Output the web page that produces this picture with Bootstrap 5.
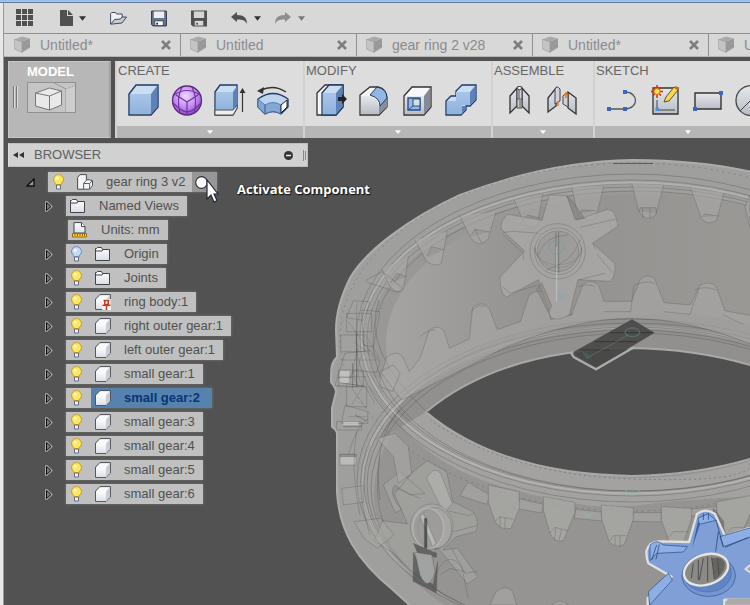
<!DOCTYPE html>
<html lang="en">
<head>
<meta charset="utf-8">
<meta name="viewport" content="width=device-width, initial-scale=1">
<title>gear ring 3 v2</title>
<link rel="stylesheet" href="https://cdn.jsdelivr.net/npm/bootstrap@5.3.0/dist/css/bootstrap.min.css">
<style>
body{font-family:"Liberation Sans",Arial,sans-serif;font-size:13px;line-height:20px;background:#525252;color:#505050}
button{border:0;padding:0;background:none;color:inherit;display:block}
svg{display:block}
.desk-edge{height:3px;background:linear-gradient(#9dbde8 0 1px,#a9c6ec 1px 2px,#5e7896 2px)}
.app-frame{border-left:3px solid #e8e8ea;box-shadow:inset 1px 0 #999;padding-left:1px;min-width:0}
.quick-bar{height:31px;background:#d8d8d8;border-bottom:1px solid #8f8f8f;padding-left:12px;gap:24px}
.split-btn{gap:6px}
.history{gap:14px}
.doc-tabs{height:23px;background:#d8d8d8;border-bottom:1px solid #b4b7b4;font-size:14px;color:#8b8b8b;padding-left:1px}
.doc-tab{width:176px;border-right:1px solid #8f8f8f;padding:0 9px;height:22px}
.doc-tab a{color:#8b8b8b;gap:10px;line-height:22px}
.doc-tab a svg{margin-top:2px}
.ribbon{padding:4px 0 0 4px;height:81px;gap:4px}
.workspace{width:103px;background:#b7b7b7;border:1px solid #c6c6c6;border-right:2px solid #a2a2a2;color:#fff;padding-left:4px;gap:9px}
.ribbon-groups{background:#ddd}
.tool-group{border-left:2px solid #d2d2d2;background:#ddd}
.g-wide{width:188px}.g-small{width:102px}
.tool-title{height:20px;padding-left:1px;color:#666}
.tool-row{height:45px;padding:3px 0 0 11px;gap:11px}
.tool-row svg{width:32px;height:34px}
.more{height:12px;background:#b6b6b6}
.viewport{background:#525252}
.scene{inset:0;z-index:0}
.browser{z-index:1;padding:5px 0 0 4px}
.browser-head{width:300px;max-width:100%;height:24px;background:#d1d1d1;border:1px solid #bdbdbd;border-left-color:#ddd;color:#606060;padding:0 1px 0 4px;gap:10px}
.tree{padding-top:5px}
.tree li{height:24px;padding-left:34px}
.tree li.root{padding-left:18px}
.twisty{width:24px;height:20px;padding-left:3px}
.root .twisty{width:22px;padding-left:0}
.leaf .twisty-gap{width:26px}
.chip{background:#c0c0c0;height:20px;box-shadow:0 0 3px #777}
.eye{width:25px;height:20px;padding-left:4px}
.node{height:20px;padding:0 8px 0 4px;gap:13px}
.root .node{padding-right:6px}
.picked{background:#5583ad;color:#0a3478;font-weight:bold;padding-right:12px}
.activate{width:25px;height:20px;background:#979797;padding-left:3px}
.tip{left:233px;top:41px;z-index:2;font:bold 13px/20px "Open Sans","Noto Sans",sans-serif;color:#fff;text-shadow:1px 1px 1px #111,0 0 2px #222}
.pointer{left:198px;top:39px;z-index:3}
</style>
<script src="https://cdn.jsdelivr.net/npm/bootstrap@5.3.0/dist/js/bootstrap.bundle.min.js"></script>
</head>
<body>
<svg width="0" height="0" class="position-absolute" aria-hidden="true">
<defs>
<linearGradient id="blueFace" x2="0" y2="1"><stop stop-color="#a9c5e6"/><stop offset="1" stop-color="#8fb2dc"/></linearGradient>
<linearGradient id="greyFace" x2="0" y2="1"><stop stop-color="#e6e8ec"/><stop offset="1" stop-color="#b9bdc6"/></linearGradient>
<linearGradient id="whiteFace" x2="0" y2="1"><stop stop-color="#fff"/><stop offset="1" stop-color="#dcdfe6"/></linearGradient>
<radialGradient id="ball" cx=".45" cy=".35" r=".7"><stop stop-color="#eed8ff"/><stop offset=".6" stop-color="#bf84ee"/><stop offset="1" stop-color="#7f3cb4"/></radialGradient>
<symbol id="tabCube" viewBox="0 0 16 16"><path d="M0 3 8 0l8 2-8 3z" fill="#aaa"/><path d="M0 3l8 2v11L0 12z" fill="#c3c5c3" stroke="#9a9a9a" stroke-width=".7"/><path d="M8 5l8-3v9l-8 5z" fill="#999"/></symbol>
<symbol id="cross" viewBox="0 0 10 10"><path d="M1 1l8 8M9 1L1 9" stroke="#7f7f7f" stroke-width="2.6"/></symbol>
<symbol id="caret" viewBox="0 0 8 5"><path d="M0 0h8L4 5z"/></symbol>
<symbol id="bulb" viewBox="0 0 12 16"><path d="M6 .6a5 5 0 0 1 5 5c0 2.300-2.200 3-2.400 5.200H3.400C3.200 8.600 1 7.900 1 5.600A5 5 0 0 1 6 .6z" fill="#fbe85c" stroke="#c99a25"/><circle cx="4.800" cy="4.200" r="1.600" fill="#fffbd0"/><path d="M4 11h4v4H4z" fill="#eef" stroke="#5b6470" stroke-width=".9"/></symbol>
<symbol id="bulbOff" viewBox="0 0 12 16"><path d="M6 .6a5 5 0 0 1 5 5c0 2.300-2.200 3-2.400 5.200H3.400C3.200 8.600 1 7.900 1 5.600A5 5 0 0 1 6 .6z" fill="#c3d9f8" stroke="#6c86b4"/><circle cx="4.800" cy="4.200" r="1.600" fill="#f2f8ff"/><path d="M4 11h4v4H4z" fill="#eef" stroke="#5b6470" stroke-width=".9"/></symbol>
<symbol id="folder" viewBox="0 0 16 16"><path d="M.5 14.500v-12h1l1-1h4l1 2h7v11z" fill="url(#whiteFace)" stroke="#3f4550"/><path d="M1 5h6l1-1.500" fill="none" stroke="#3f4550"/></symbol>
<symbol id="part" viewBox="0 0 16 16"><path d="M.6 5 5 .6h10.400V11L11 15.400H.6z" fill="#fafafa" stroke="#484b52"/><path d="M1.200 5.200H11V15H1.200z" fill="url(#whiteFace)"/><path d="M11 5.200l4-4V11l-4 4z" fill="#c9ccd2"/></symbol>
<symbol id="pinned" viewBox="0 0 16 16"><use href="#part"/><path d="M7 5h9v11H7z" fill="#fff" fill-opacity=".8"/><path d="M8.500 6.500h6M9.800 7v3.500h3.400V7M7.500 11.200h8M11.500 11v5" fill="none" stroke="#c43a1c" stroke-width="1.500"/></symbol>
<symbol id="assembly" viewBox="0 0 16 16"><path d="M.6 15.200V3.500L3 .6h6.400v5.200h3.200l2.900.9v5L12.600 15.200z" fill="#f4f5f8" stroke="#484b52"/><path d="M6.600 15V9.500L9.600 6M6.600 9.500h6l2.700-3M12.600 9.500V15" fill="none" stroke="#5d616a"/></symbol>
<symbol id="units" viewBox="0 0 16 16"><path d="M2 11V.6h7.500l3.500 4V11z" fill="url(#whiteFace)" stroke="#3f4550"/><path d="M9.500.6v4H13" fill="#fff" stroke="#3f4550"/><path d="M.5 11.500h14v3.500H.5z" fill="#ffcf2e" stroke="#9b6a0c"/><path d="M3 12v2M5.500 12v2M8 12v2M10.500 12v2M12.500 12v2" stroke="#9b6a0c"/></symbol>
<symbol id="closed" viewBox="0 0 8 11"><path d="M1.500 1.500v8L6 5.500z" fill="#555" stroke="#aaa" stroke-width="3" stroke-linejoin="round"/><path d="M1.500 1.500v8L6 5.500z" fill="#777" stroke="#111" stroke-linejoin="round"/></symbol>
<symbol id="disk" viewBox="0 0 17 17"><path d="M.6.6h15.800v15.800H2L.6 15z" fill="#68758a" stroke="#273142"/><path d="M3 1h11v7H3z" fill="#eceef2"/><path d="M4 11h9v5H4z" fill="#fff" stroke="#273142" stroke-width=".8"/><path d="M5.500 13h2v2h-2z" fill="#273142"/></symbol>
</defs>
</svg>
<div class="d-flex flex-column min-vh-100">
<div class="desk-edge"></div>
<div class="app-frame flex-grow-1 d-flex flex-column overflow-hidden">

<header class="quick-bar d-flex align-items-center">
 <button type="button" aria-label="Data panel"><svg width="20" height="18" viewBox="0 0 20 18"><path d="M0 0h5v5H0zM6 0h5v5H6zM12 0h5v5h-5zM0 6h5v5H0zM6 6h5v5H6zM12 6h5v5h-5zM0 12h5v5H0zM6 12h5v5H6zM12 12h5v5h-5z" fill="#505050"/></svg></button>
 <button type="button" aria-label="New file" class="split-btn d-flex align-items-center"><svg width="13" height="16" viewBox="0 0 13 16" fill="#505050"><path d="M0 0h7v6h6v10H0z"/><path d="M8 0l5 5H8z"/></svg><svg width="7" height="5" fill="#333"><use href="#caret"/></svg></button>
 <button type="button" aria-label="Open"><svg width="17" height="13" viewBox="0 0 17 13"><path d="M.6 12V1.500l1-1h4l1 1.500h5.600V5" fill="#eef0f5" stroke="#404a5a"/><path d="M.8 12.200 4.500 7.500l6-.5 1.500-2h4.500L12 11z" fill="#c5ccda" stroke="#404a5a"/></svg></button>
 <button type="button" aria-label="Save"><svg width="16" height="17"><use href="#disk"/></svg></button>
 <button type="button" aria-label="Save as"><svg width="16" height="17" viewBox="0 0 17 17"><path d="M0 0h17v17H2l-2-2z" fill="#505050"/><path d="M3 1h11v7H3z" fill="#d5d5d5"/><path d="M4 11h9v5H4z" fill="#d8d8d8"/><path d="M5.500 13h2v2h-2z" fill="#505050"/></svg></button>
 <div class="history d-flex align-items-center">
  <button type="button" aria-label="Undo" class="split-btn d-flex align-items-center"><svg width="17" height="12" viewBox="0 0 17 12"><path d="M0 5l6-5v3c7 0 10 3 10 9-1.500-3.500-4-4.600-10-4.600V10z" fill="#505050"/></svg><svg width="7" height="5" fill="#333"><use href="#caret"/></svg></button>
  <button type="button" aria-label="Redo" class="split-btn d-flex align-items-center"><svg width="17" height="12" viewBox="0 0 17 12"><path d="M16 5l-6-5v3C3 3 0 6 0 12c1.500-3.500 4-4.600 10-4.600V10z" fill="#8e8e8e"/></svg><svg width="7" height="5" fill="#777"><use href="#caret"/></svg></button>
 </div>
</header>

<nav class="doc-tabs d-flex overflow-hidden" aria-label="Documents">
 <div class="doc-tab d-flex align-items-center justify-content-between flex-shrink-0"><a href="#" class="d-flex text-decoration-none"><svg width="16" height="17"><use href="#tabCube"/></svg>Untitled*</a><button type="button" aria-label="Close"><svg width="10" height="10"><use href="#cross"/></svg></button></div>
 <div class="doc-tab d-flex align-items-center justify-content-between flex-shrink-0"><a href="#" class="d-flex text-decoration-none"><svg width="16" height="17"><use href="#tabCube"/></svg>Untitled</a><button type="button" aria-label="Close"><svg width="10" height="10"><use href="#cross"/></svg></button></div>
 <div class="doc-tab d-flex align-items-center justify-content-between flex-shrink-0"><a href="#" class="d-flex text-decoration-none"><svg width="16" height="17"><use href="#tabCube"/></svg>gear ring 2 v28</a><button type="button" aria-label="Close"><svg width="10" height="10"><use href="#cross"/></svg></button></div>
 <div class="doc-tab d-flex align-items-center justify-content-between flex-shrink-0"><a href="#" class="d-flex text-decoration-none"><svg width="16" height="17"><use href="#tabCube"/></svg>Untitled*</a><button type="button" aria-label="Close"><svg width="10" height="10"><use href="#cross"/></svg></button></div>
 <div class="doc-tab d-flex align-items-center justify-content-between flex-shrink-0"><a href="#" class="d-flex text-decoration-none"><svg width="16" height="17"><use href="#tabCube"/></svg>Untitled</a></div>
</nav>

<div class="ribbon d-flex overflow-hidden">
 <button type="button" class="workspace d-flex flex-shrink-0 text-start">
  <svg class="mt-4" width="5" height="22"><path d="M.5 0v22M3.500 0v22" stroke="#777"/><path d="M1.500 0v22M4.500 0v22" stroke="#ddd"/></svg>
  <span class="d-block"><b class="d-block">MODEL</b>
  <svg width="49" height="31" viewBox="0 0 49 31"><path d="M.5.500h48v30H.5z" fill="#c5c5c5" stroke="#909090"/><path d="M27 1l12 6 9-3M39 7v23" fill="none" stroke="#999"/><path d="M39 7l9-3v26h-9z" fill="#cdcdcd"/><path d="M8.500 11l14-5 12 3v14l-12 5-14-4z" fill="#e9e9e9" stroke="#777"/><path d="M8.500 11l14 3 12-5M22.500 14v14" fill="none" stroke="#777"/></svg></span>
 </button>
 <div class="ribbon-groups d-flex flex-grow-1 overflow-hidden">
  <section class="tool-group g-wide flex-shrink-0">
   <div class="tool-title">CREATE</div>
   <div class="tool-row d-flex align-items-start">
    <button type="button" aria-label="Box"><svg viewBox="0 0 32 34"><path d="M1 10 8 1h22v22l-7 8H1z" fill="#c9def2" stroke="#1f3a66" stroke-width="1.400"/><path d="M2 10h21v20H2z" fill="url(#blueFace)"/><path d="M23 10l6-8v21l-6 7z" fill="#5d82b8"/></svg></button>
    <button type="button" aria-label="Form"><svg viewBox="0 0 32 34"><circle cx="16" cy="16.500" r="14.500" fill="url(#ball)" stroke="#59297f" stroke-width="1.300"/><path d="M3 11q13-9 26 0M16 18V31M16 18L5 11M16 18l11-7M11 3Q5 15 9 29M21 3q6 12 2 26M2 19q8 8 14 9 7-1 14-9" fill="none" stroke="#6f35a0" stroke-width="1.200"/></svg></button>
    <button type="button" aria-label="Extrude"><svg viewBox="0 0 32 34"><path d="M1 8 6 1h17v23l-4 7H1z" fill="#c9def2" stroke="#1f3a66" stroke-width="1.300"/><path d="M2 8h17v18H2z" fill="url(#blueFace)"/><path d="M19 8l4-6v19l-4 5z" fill="#5d82b8"/><path d="M1 26h18l4-5v3l-4 7H1z" fill="#eee" stroke="#555"/><path d="M28.500 28V6" stroke="#333" stroke-width="1.200"/><path d="M25.500 9l3-5 3 5z" fill="#333"/></svg></button>
    <button type="button" aria-label="Revolve"><svg viewBox="0 0 32 34"><path d="M4 6q13-6 25 2" fill="none" stroke="#333" stroke-width="1.400"/><path d="M0 7l7-4-1 7z" fill="#333"/><path d="M1 15Q16 4 31 15v8l-7 7q-8-5-16 0l-7-7z" fill="#bdd4ec" stroke="#1f3a66" stroke-width="1.300"/><path d="M1 15l7 6v9l-7-7zM8 21q8-5 16 0v9q-8-5-16 0z" fill="#82a8d6" stroke="#476a9c" stroke-width=".8"/><path d="M24 21l6-5v7l-6 6z" fill="#fff" stroke="#222"/></svg></button>
   </div>
   <button type="button" class="more w-100 d-flex justify-content-center align-items-center" aria-label="More create tools"><svg width="6" height="4" viewBox="0 0 8 5" fill="#fff"><path d="M0 0h8L4 5z"/></svg></button>
  </section>
  <section class="tool-group g-wide flex-shrink-0">
   <div class="tool-title">MODIFY</div>
   <div class="tool-row d-flex align-items-start">
    <button type="button" aria-label="Press pull"><svg viewBox="0 0 32 34"><path d="M1 9 9 1h18v22l-7 8H1z" fill="#f3f5f8" stroke="#333" stroke-width="1.300"/><path d="M6 9l7-8h14v22l-7 8H6z" fill="#c9def2" stroke="#1f3a66" stroke-width="1.300"/><path d="M7 9h13v21H7z" fill="url(#blueFace)"/><path d="M20 9l6-7v21l-6 7z" fill="#5d82b8"/><path d="M22 13h4v-3l5 5-5 5v-3h-4z" fill="#222"/></svg></button>
    <button type="button" aria-label="Fillet"><svg viewBox="0 0 32 34"><path d="M1 11l10-8h8q9 2 9 12v8l-8 8H1z" fill="#f6f6f8" stroke="#333" stroke-width="1.300"/><path d="M2 12h10q8 4 8 11v7H2z" fill="url(#greyFace)"/><path d="M20 22l8-9v10l-8 7z" fill="#888e99"/><path d="M11 11l7-8q10 2 10 11l-7 8q0-8-10-11z" fill="#93b7e2" stroke="#1f3a66"/></svg></button>
    <button type="button" aria-label="Shell"><svg viewBox="0 0 32 34"><path d="M2 12l8-9h19v20l-7 8H2z" fill="#f8f8fa" stroke="#333" stroke-width="1.300"/><path d="M3 12h19v18H3z" fill="url(#greyFace)"/><path d="M22 12l6-8v19l-6 7z" fill="#858b96"/><path d="M6 14h12v12H6z" fill="#96b9e1" stroke="#24508e" stroke-width="1.400"/><path d="M11 15h7v7h-7z" fill="#ddd" stroke="#24508e"/><path d="M6 26l5-4" stroke="#24508e"/></svg></button>
    <button type="button" aria-label="Combine"><svg viewBox="0 0 32 34"><path d="M1 17l5-5h5V7l6-6h14v15l-6 6h-4v4l-5 5H1z" fill="#c9def2" stroke="#1f3a66" stroke-width="1.300"/><path d="M2 17h9V8h14v13h-8v9H2z" fill="url(#blueFace)"/><path d="M25 8l5-6v14l-5 5zM17 22h3v4l-3 4z" fill="#5d82b8"/></svg></button>
   </div>
   <button type="button" class="more w-100 d-flex justify-content-center align-items-center" aria-label="More modify tools"><svg width="6" height="4" viewBox="0 0 8 5" fill="#fff"><path d="M0 0h8L4 5z"/></svg></button>
  </section>
  <section class="tool-group g-small flex-shrink-0">
   <div class="tool-title">ASSEMBLE</div>
   <div class="tool-row d-flex align-items-start">
    <button type="button" aria-label="Joint"><svg viewBox="0 0 32 34"><path d="M6 12l7-8v18l-7 7zM25 12l-7-8v18l7 7z" fill="url(#greyFace)" stroke="#333" stroke-width="1.300"/><path d="M13 4q3-3 5 0v20h-5z" fill="#cfd2d8" stroke="#444"/><path d="M13 15h5M15 6v9M16 16v7" stroke="#555"/><ellipse cx="15.500" cy="4" rx="2.500" ry="1.500" fill="#fff" stroke="#333"/></svg></button>
    <button type="button" aria-label="As-built joint"><svg viewBox="0 0 32 34"><path d="M1 14l8-10v18l-8 6zM29 14l-8-6v16l8 6z" fill="url(#greyFace)" stroke="#333" stroke-width="1.300"/><path d="M8 5q2-4 5 0v12l-5 3zM16 12q2-4 5-2v13l-5-3z" fill="#cfd2d8" stroke="#444"/><path d="M11 17v5M19 8v6" stroke="#f17a16" stroke-width="1.600"/><path d="M17 11h4" stroke="#f17a16"/></svg></button>
   </div>
   <button type="button" class="more w-100 d-flex justify-content-center align-items-center" aria-label="More assemble tools"><svg width="6" height="4" viewBox="0 0 8 5" fill="#fff"><path d="M0 0h8L4 5z"/></svg></button>
  </section>
  <section class="tool-group g-wide flex-shrink-0">
   <div class="tool-title">SKETCH</div>
   <div class="tool-row d-flex align-items-start">
    <button type="button" aria-label="Line"><svg viewBox="0 0 32 34"><path d="M3 25h16c14 0 14-17 0-17" fill="none" stroke="#555" stroke-width="1.300"/><path d="M1 23h4v4H1zM17 23h4v4h-4zM17 6h4v4h-4z" fill="#3768c8"/></svg></button>
    <button type="button" aria-label="Create sketch"><svg viewBox="0 0 32 34"><path d="M4 4h25v26H4z" fill="url(#greyFace)" stroke="#333" stroke-width="1.300"/><path d="M9 26h17M8 24v-8" stroke="#444" fill="none"/><path d="M6.500 23.500h3.500V27H6.500z" fill="#4b8ee8"/><path d="M15 18l2-5L25 3l4 3-9 11z" fill="#ffd84a" stroke="#553"/><path d="M25 3l2-1 3 2-1 2z" fill="#b8763c"/><path d="M8 1v13M2 7.500h12M4 3.500l8 8M12 3.500l-8 8" stroke="#d22c08" stroke-width="1.500"/><circle cx="8" cy="7.500" r="3" fill="#ffe24a" stroke="#e2731a"/></svg></button>
    <button type="button" aria-label="Rectangle"><svg viewBox="0 0 32 34"><path d="M3 9h26v16H3z" fill="url(#greyFace)" stroke="#333" stroke-width="1.400"/><path d="M1 23h4v4H1zM27 7h4v4h-4z" fill="#3768c8"/></svg></button>
    <button type="button" aria-label="Circle"><svg viewBox="0 0 32 34"><circle cx="16" cy="16.500" r="15" fill="url(#greyFace)" stroke="#444" stroke-width="1.300"/><path d="M5 27l11-11" stroke="#444"/></svg></button>
   </div>
   <button type="button" class="more w-100 d-flex justify-content-center align-items-center" aria-label="More sketch tools"><svg width="6" height="4" viewBox="0 0 8 5" fill="#fff"><path d="M0 0h8L4 5z"/></svg></button>
  </section>
 </div>
</div>

<main class="viewport flex-grow-1 position-relative">
<svg class="scene position-absolute w-100 h-100" viewBox="4 138 746 467" preserveAspectRatio="xMinYMin slice" role="img" aria-label="Ring of gears">
 <defs>
  <clipPath id="ringClip"><path id="ringShape" d="M760 174C720 164 675 160 632 160C570 161 510 176 460 195C410 218 366 250 350 278C340 298 336 315 336 330L337 357C331 363 331 368 331 382Q336 388 336 392L332 408V427Q337 430 337 434V492C339 530 356 560 393 590L415 610H760z"/></clipPath>
  <linearGradient id="wall" x2="1"><stop stop-color="#a5a4a2"/><stop offset=".3" stop-color="#939290"/><stop offset=".7" stop-color="#999895"/><stop offset="1" stop-color="#91908f"/></linearGradient>
 </defs>
 <use href="#ringShape" fill="#9f9f9d" stroke="#adadab" stroke-width="2"/>
 <g clip-path="url(#ringClip)">
  <ellipse cx="632" cy="344" rx="264" ry="153" fill="#999896"/>
  <ellipse cx="638" cy="344" rx="252" ry="150" fill="url(#wall)"/>
  <ellipse cx="632" cy="488" rx="271" ry="168" fill="#a09f9d"/>
  <ellipse cx="632" cy="494" rx="258" ry="162" fill="#959492"/>
  <path d="M370 380Q410 460 500 486T632 506 760 496V458Q700 478 632 478 500 475 426 412L390 375z" fill="#a3a2a0"/>
  <path d="M379 440Q420 350 560 325T760 330V368Q650 335 560 356 480 370 426 412z" fill="#91908e"/>
 </g>
 <path d="M426 412Q500 350 632 348 700 349 760 368V456Q700 475 632 476 500 474 426 412z" fill="#505050" stroke="#a9a9a7" stroke-width="2"/>

 <!-- concentric rim edges -->
 <g clip-path="url(#ringClip)" fill="none" stroke="#4f4f4e" stroke-opacity=".42" stroke-width=".8">
  <ellipse cx="632" cy="337" rx="292" ry="174" stroke-dasharray="2 4" stroke-opacity=".4"/>
  <path d="M613 163.500h40" stroke="#444" stroke-opacity=".9"/>
  <ellipse cx="632" cy="338" rx="276" ry="164"/>
  <ellipse cx="632" cy="338" rx="272" ry="158"/>
  <ellipse cx="632" cy="338" rx="270" ry="155" stroke="#d0d0ce" stroke-opacity=".35" stroke-width="3"/>
  <ellipse cx="632" cy="338" rx="269" ry="154"/>
  <ellipse cx="633" cy="339" rx="266" ry="152"/>
  <ellipse cx="635" cy="341" rx="262" ry="150"/>
  <ellipse cx="632" cy="480" rx="275" ry="161"/>
  <ellipse cx="632" cy="481" rx="271" ry="158"/>
  <ellipse cx="632" cy="483" rx="270" ry="156" stroke="#d0d0ce" stroke-opacity=".3" stroke-width="2.500"/>
  <ellipse cx="632" cy="483" rx="268" ry="156"/>
  <ellipse cx="632" cy="485" rx="265" ry="155"/>
  <ellipse cx="633" cy="488" rx="262" ry="155"/>
  <path d="M430 420Q510 475 632 479T750 463" stroke-dasharray="2 3" stroke-opacity=".5"/>
  <path d="M379 300Q360 350 428 413M400 410Q372 440 380 500"/>
 </g>

 <!-- rear gear and upper half, drawn at three units per pixel -->
 <g transform="translate(320 140) scale(.33333)" fill="#aaa9a6" fill-opacity=".6" stroke="#555" stroke-opacity=".42" stroke-width="2.200" stroke-linejoin="round">
  <path d="M935 130l22 85q22 35 50 10l24-90M957 215l4-12h46l4 15M968 203v32M990 203v32"/>
  <path d="M1112 145l32 90q20 25 46 5l22-82M1144 232l10-10 42 6"/>
  <path d="M1275 200l15 60V165z"/>
  <path d="M755 142l18 80q28 30 56 8l22-92M773 222l14-12 42 2"/>
  <path d="M583 180l25 60q20 32 44 14l16-90M608 240l15-15 38 10"/>
  <path d="M420 228l30 62q22 38 54 8l24-82M450 290l15-22 45 8M465 268l20 42"/>
  <path d="M285 300l35 65q30 18 44 4l18-95M320 350l15-30 40 10"/>
  <path d="M185 385l25 55q24 24 40 10l15-100M210 430l20-30 30 10"/>
  <path d="M852 484h82l28-68q20-16 42 0l28 72 79 7 30-60q30-14 48 5l25 72 80 15v85Q1100 535 935 535T560 620L245 780l-60-80 15-50q30-20 48 0l20 45 32-40 28-85q30-20 45 5l15 50 60-28 10-95q30-24 50 5l24 62 70-25 25-78q30-24 50 0l15 72 62-12 34-90q24-24 48 0z"/>
  <path d="M945 435q35-15 60-5M1125 450q30-14 65 0M775 440q25-10 50 0M450 520q20-30 45-20M300 590q20-20 45-20M852 515h80l10-80M1030 515l80 8 25-72M1210 525l60 28M690 530l70-8" fill="none"/>
  <path d="M688 165l52 2 30 73 92-32q25 0 32 50l-76 52 66 60q5 40-15 54l-95-5-26 105q-28 20-55 10l-38-115-95 52q-20-5-20-60l74-78-70-65q-5-25 20-45l102 18z" fill-opacity=".8"/>
  <path d="M742 168l22 70 30-3-38-52zM665 428l30 70-10 20-35-70z" fill="#868583"/>
  <path d="M548 278l28-4 100 7M548 440l22 20 85-25M780 262l108-25M818 310l8 18M550 285l60 55v20M880 400l-50-58M775 420l80-20" fill="none"/>
  <circle cx="713" cy="334" r="83" fill="#a5a5a2"/><circle cx="714" cy="334" r="70"/><ellipse cx="714" cy="334" rx="62" ry="61" fill="#979694"/><path d="M645 334a73 66 0 0 0 140 0v-12a68 52 0 0 1-140 0z" fill="#b9b8b5"/><path d="M655 345q20-60 90-60M680 390q80-25 100-90" fill="none"/>
  <path d="M708 276v122M716 276v122" stroke="#444" stroke-width="3"/><path d="M710 320v165" stroke="#c4d3d1" stroke-opacity=".7" stroke-width="3"/>
  <ellipse cx="709" cy="322" rx="22" ry="20" fill="none" stroke="#7b9a98" stroke-opacity=".45" stroke-width="5"/><path d="M712 458l38 8-38 18z" fill="#87aaa8" stroke="none"/>
  <path d="M936 538l68 40-175 105-70-46z" fill="#494948" fill-opacity=".93" stroke="none"/>
  <path d="M870 578h130M825 605h125M780 630h90" stroke="#222" stroke-opacity=".7"/>
  <path d="M752 638l10 14 66 36 114-66" fill="none" stroke="#adadab" stroke-opacity="1" stroke-width="7"/>
  <ellipse cx="937" cy="577" rx="22" ry="13" fill="none" stroke="#5f8080" stroke-opacity=".6" stroke-width="4"/><path d="M925 585L800 655" stroke="#627e7e" stroke-opacity=".8"/><path d="M782 630l35 20-17 8z" fill="#496868" stroke="none"/>
 </g>

 <!-- lower half: near teeth, side gear and picked gear -->
 <g transform="translate(320 345) scale(.33333)" fill="#aaa9a6" fill-opacity=".6" stroke="#555" stroke-opacity=".42" stroke-width="2.200" stroke-linejoin="round">
  <path d="M444 412l66 38-10 28-80-26zM600 462l70 16-5 26-82-14zM767 493l77 8 3 27-84-8zM940 503h84v28l-88-2zM1115 492l75-8v24l-83 6z"/>
  <path d="M505 420v50l20 60q18 28 48 20l25-60v-50zM670 455v40l20 70q15 30 40 22l35-85v-30zM844 480v40l24 70q20 22 45 8l27-75v-35zM1024 485v40l24 65q20 22 42 5l25-75v-30zM1190 470v30l30 70q25 12 45-5l35-80v-35z" fill-opacity=".75"/>
  <path d="M525 530l15-15 40 8M690 565l15-18 38 10M868 590l12-18h40M1048 575l12-15h42M1225 560l12-12h36M540 515v32M555 518v34M708 548l-5 38M725 552l-8 34M885 573v30M900 573v32" fill="none"/>
  <path d="M510 780l18-40q30-24 50 0l12 40zM695 780q25-24 50 0z"/>
  <path d="M190 420l50-40 75 65-45 5-45-30q-18 18 5 55l15 18-20 10zM280 380l42-33 58 33 18 90 60 30q22 25 10 60l-60 15-40 40 45-5 60 85-30 22-95-115-10 60-60 25-55-60-60-40 25-60 75 10-40-90z" fill-opacity=".5"/>
  <path d="M320 400q20-40 42-15l35 90-25 30z" fill="#b6b5b2"/>
  <path d="M385 498l60 14 18-8M400 560l70-18M395 610l40 75 38-6M350 680q35-65 75-15l20 95M360 690l30-20 45 10M230 430l70 30" fill="none"/>
  <ellipse cx="335" cy="545" rx="64" ry="68" fill="#adacaa"/><ellipse cx="345" cy="550" rx="50" ry="62" fill="none"/><ellipse cx="325" cy="550" rx="46" ry="60" fill="#979694" stroke="#ccc" stroke-width="4"/><path d="M300 515l38 90 10-10-38-90z" fill="#c3cdcb"/>
  <path d="M313 520v90h8v-90z" fill="#333" fill-opacity=".7"/><path d="M280 595l70 30v12l-55-8zM280 622l34 75 25 22 14-70-4 95-70-35z" fill="#555" fill-opacity=".8"/><path d="M285 622l50 8 10 50q-20 65-45 10z" fill="#a0a3a1" fill-opacity="1"/>
  <path d="M170 280l55-15 40 40 10 80-40 30-15-80z"/>
  <path d="M60 328h48v32H60z" fill="#cfcfcd"/><path d="M60 328h48v7H60z" fill="#777"/>
  <path d="M65 430l65-8v50l-60 8zM102 530l80-10 40 50-50 40-40-30z" fill-opacity=".3"/>
  <path d="M180 330q-20 130 10 200M110 260q-20 110 10 250M150 300q-55 100 0 270M85 330q25-90 60-110" fill="none"/>
  <path d="M925 448L800 518" stroke="#8fb3b0"/><ellipse cx="937" cy="439" rx="20" ry="11" fill="none" stroke="#8fb3b0" stroke-opacity=".5" stroke-width="4"/><path d="M780 500l45 8-25 12z" fill="#91b0ad" stroke="none"/>
  <path d="M1180 490l32 40-4 60-30-50z" fill="#666"/>
  <path d="M1300 545l-85 28-30-66q-28-20-54 0l-24 84-90-2q-30 0-38 30 0 22 6 36l70 40-72 64v50h230v-45l110 5z" fill="#7f9fd6" fill-opacity="1" stroke="#e2e0da" stroke-opacity="1" stroke-width="7"/>
  <path d="M1134 520l30-14 24 20-50 12zM990 600q20-20 40 0l72 5-12 16-80 4-20 22zM985 740l60-55 12 20-68 75zM1210 605l-10-30 95-28v28z" fill="#8eafe6" fill-opacity="1" stroke="#234a8a" stroke-opacity=".9"/>
  <path d="M1134 530l-18 80 24-72z" fill="#365fa6" fill-opacity="1" stroke="none"/>
  <path d="M1188 525l22 80M1195 560l-8 60M1215 607l70-30M1010 600l-15 45M1018 598l-10 45M1150 505v20M1165 504v20" fill="none" stroke="#1c3664" stroke-opacity=".9"/>
  <ellipse cx="1166" cy="692" rx="80" ry="62" fill="#7496d0" fill-opacity="1" stroke="#29508f" stroke-opacity=".9"/><ellipse cx="1162" cy="684" rx="72" ry="57" fill="#6085c4" fill-opacity="1" stroke="#29508f"/>
  <ellipse cx="1158" cy="674" rx="68" ry="45" transform="rotate(-18 1158 674)" fill="#8b8a87" fill-opacity="1" stroke="#e8e6e0" stroke-opacity="1" stroke-width="7"/>
  <path d="M1163 635v75M1150 640l-12 65M1175 637l8 65M1193 640l4 50M1120 655l-6 45M1135 645v60" stroke="#333" stroke-opacity=".7" stroke-width="3"/><path d="M1175 640q32-8 40 15 0 28-30 50z" fill="#4c4c4a" stroke="none"/>
  <path d="M1215 780l8-20h80v20z" fill="#aaa" fill-opacity="1" stroke="#e2e0da"/><path d="M1300 652l-24 20 24 18z" fill="#aaa" fill-opacity="1" stroke="#e2e0da" stroke-opacity="1" stroke-width="5"/>
 </g>

 <!-- crowded side teeth on the left edge -->
 <g transform="translate(320 270) scale(.33333)" fill="#b9b8b5" fill-opacity=".12" stroke="#444" stroke-opacity=".4" stroke-width="2">
  <path d="M100 92l50 4-20 55-50-8zM80 130h75v55H80zM62 195h70v50H62zM125 120l55 5-20 105-30-5zM138 30l50-25 60 50-15 12-90-30zM180 305l40-20 20 25-22 55-38-15z"/>
  <path d="M75 250l75-8 30 30-10 35-70-5-20 45H45zM55 300h75v50H55zM80 350h60v60H80zM75 405l68 20v35H65zM50 455h75v25H50z"/>
  <path d="M115 235q-30 70 0 115M135 240q-40 60-5 115M125 355l-30 50M110 100v250M60 270h110M60 320h80M85 440h55M95 355l45 60M140 300l50 70M130 340l35 60M150 350l50 70M128 180l50 85M85 155l65 90M100 215l80 60" fill="none" stroke-opacity=".3"/>
  <path d="M60 302h28v38H60zM70 455h45v10H70z" fill="#e2e2e0" fill-opacity=".5" stroke="none"/><path d="M58 338l72 10M55 322h40M98 280v70M110 190v160M70 470h55M105 435l35 18" fill="none" stroke="#222" stroke-opacity=".45"/>
 </g>
</svg>

<aside class="browser position-relative">
 <div class="browser-head d-flex align-items-center">
  <button type="button" aria-label="Collapse browser"><svg width="11" height="6" viewBox="0 0 11 6" fill="#333"><path d="M5 0v6L0 3zM11 0v6L6 3z"/></svg></button>
  <span class="flex-grow-1">BROWSER</span>
  <button type="button" aria-label="Minimize"><svg width="9" height="9"><circle cx="4.500" cy="4.500" r="4.500" fill="#333"/><path d="M2 4.500h5" stroke="#eee" stroke-width="1.500"/></svg></button>
  <svg width="3" height="11"><path d="M.5 0v11M2.500 1v9" stroke="#888"/></svg>
 </div>
 <ul class="tree list-unstyled mb-0">
  <li class="root d-flex"><button type="button" class="twisty" aria-label="Collapse"><svg width="9" height="9" viewBox="0 0 9 9"><path d="M8 1v7H1z" fill="#999" stroke="#111" stroke-width="1.400"/></svg></button><div class="chip d-flex"><button type="button" class="eye" aria-label="Visibility"><svg width="13" height="16"><use href="#bulb"/></svg></button><button type="button" class="node d-flex align-items-center"><svg width="16" height="16"><use href="#assembly"/></svg>gear ring 3 v2</button><button type="button" class="activate" aria-label="Activate Component"><svg width="13" height="13"><circle cx="6.500" cy="6.500" r="5.800" fill="#fff" stroke="#333" stroke-width="1.200"/></svg></button></div></li>
  <li class="d-flex"><button type="button" class="twisty" aria-label="Expand"><svg width="8" height="11"><use href="#closed"/></svg></button><div class="chip d-flex"><button type="button" class="node d-flex align-items-center"><svg width="16" height="16"><use href="#folder"/></svg>Named Views</button></div></li>
  <li class="leaf d-flex"><span class="twisty-gap"></span><div class="chip d-flex"><button type="button" class="node d-flex align-items-center"><svg width="16" height="16"><use href="#units"/></svg>Units: mm</button></div></li>
  <li class="d-flex"><button type="button" class="twisty" aria-label="Expand"><svg width="8" height="11"><use href="#closed"/></svg></button><div class="chip d-flex"><button type="button" class="eye" aria-label="Visibility"><svg width="13" height="16"><use href="#bulbOff"/></svg></button><button type="button" class="node d-flex align-items-center"><svg width="16" height="16"><use href="#folder"/></svg>Origin</button></div></li>
  <li class="d-flex"><button type="button" class="twisty" aria-label="Expand"><svg width="8" height="11"><use href="#closed"/></svg></button><div class="chip d-flex"><button type="button" class="eye" aria-label="Visibility"><svg width="13" height="16"><use href="#bulb"/></svg></button><button type="button" class="node d-flex align-items-center"><svg width="16" height="16"><use href="#folder"/></svg>Joints</button></div></li>
  <li class="d-flex"><button type="button" class="twisty" aria-label="Expand"><svg width="8" height="11"><use href="#closed"/></svg></button><div class="chip d-flex"><button type="button" class="eye" aria-label="Visibility"><svg width="13" height="16"><use href="#bulb"/></svg></button><button type="button" class="node d-flex align-items-center"><svg width="16" height="16"><use href="#pinned"/></svg>ring body:1</button></div></li>
  <li class="d-flex"><button type="button" class="twisty" aria-label="Expand"><svg width="8" height="11"><use href="#closed"/></svg></button><div class="chip d-flex"><button type="button" class="eye" aria-label="Visibility"><svg width="13" height="16"><use href="#bulb"/></svg></button><button type="button" class="node d-flex align-items-center"><svg width="16" height="16"><use href="#part"/></svg>right outer gear:1</button></div></li>
  <li class="d-flex"><button type="button" class="twisty" aria-label="Expand"><svg width="8" height="11"><use href="#closed"/></svg></button><div class="chip d-flex"><button type="button" class="eye" aria-label="Visibility"><svg width="13" height="16"><use href="#bulb"/></svg></button><button type="button" class="node d-flex align-items-center"><svg width="16" height="16"><use href="#part"/></svg>left outer gear:1</button></div></li>
  <li class="d-flex"><button type="button" class="twisty" aria-label="Expand"><svg width="8" height="11"><use href="#closed"/></svg></button><div class="chip d-flex"><button type="button" class="eye" aria-label="Visibility"><svg width="13" height="16"><use href="#bulb"/></svg></button><button type="button" class="node d-flex align-items-center"><svg width="16" height="16"><use href="#part"/></svg>small gear:1</button></div></li>
  <li class="d-flex"><button type="button" class="twisty" aria-label="Expand"><svg width="8" height="11"><use href="#closed"/></svg></button><div class="chip d-flex"><button type="button" class="eye" aria-label="Visibility"><svg width="13" height="16"><use href="#bulb"/></svg></button><button type="button" class="node picked d-flex align-items-center"><svg width="16" height="16"><use href="#part"/></svg>small gear:2</button></div></li>
  <li class="d-flex"><button type="button" class="twisty" aria-label="Expand"><svg width="8" height="11"><use href="#closed"/></svg></button><div class="chip d-flex"><button type="button" class="eye" aria-label="Visibility"><svg width="13" height="16"><use href="#bulb"/></svg></button><button type="button" class="node d-flex align-items-center"><svg width="16" height="16"><use href="#part"/></svg>small gear:3</button></div></li>
  <li class="d-flex"><button type="button" class="twisty" aria-label="Expand"><svg width="8" height="11"><use href="#closed"/></svg></button><div class="chip d-flex"><button type="button" class="eye" aria-label="Visibility"><svg width="13" height="16"><use href="#bulb"/></svg></button><button type="button" class="node d-flex align-items-center"><svg width="16" height="16"><use href="#part"/></svg>small gear:4</button></div></li>
  <li class="d-flex"><button type="button" class="twisty" aria-label="Expand"><svg width="8" height="11"><use href="#closed"/></svg></button><div class="chip d-flex"><button type="button" class="eye" aria-label="Visibility"><svg width="13" height="16"><use href="#bulb"/></svg></button><button type="button" class="node d-flex align-items-center"><svg width="16" height="16"><use href="#part"/></svg>small gear:5</button></div></li>
  <li class="d-flex"><button type="button" class="twisty" aria-label="Expand"><svg width="8" height="11"><use href="#closed"/></svg></button><div class="chip d-flex"><button type="button" class="eye" aria-label="Visibility"><svg width="13" height="16"><use href="#bulb"/></svg></button><button type="button" class="node d-flex align-items-center"><svg width="16" height="16"><use href="#part"/></svg>small gear:6</button></div></li>
 </ul>
</aside>
<div class="tip position-absolute text-nowrap">Activate Component</div>
<svg class="pointer position-absolute" width="17" height="28" viewBox="0 0 17 28"><path d="M5 3v19l4-4 3 7 3-1.500-3-6.500h4z" fill="#fff" stroke="#222b3c" stroke-width="1.200"/></svg>
</main>
</div>
</div>
</body>
</html>
